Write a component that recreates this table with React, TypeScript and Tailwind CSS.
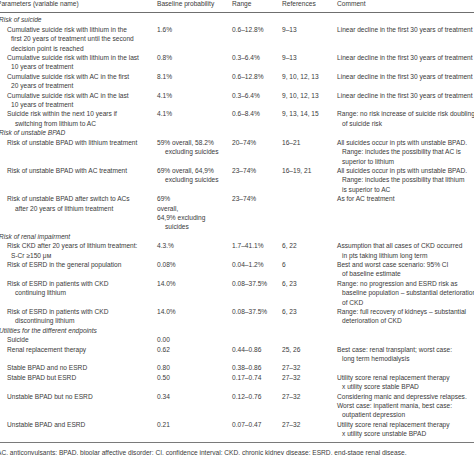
import React from 'react';

// A cell line: plain text, or [text, indent key]
type Line = string | [string, 'a' | 'b' | 'c'];

interface Row {
  params: Line[];
  base?: Line[];
  range?: string;
  refs?: string;
  comment?: Line[];
}

type Entry = { section: string } | Row;

const indentClass: Record<string, string> = {
  a: 'pl-[4px]',
  b: 'pl-[8px]',
  c: 'pl-[5px]',
};

const linear = ['Linear decline in the first 30 years of treatment'];

const entries: Entry[] = [
  { section: 'Risk of suicide' },
  {
    params: ['Cumulative suicide risk with lithium in the', ['first 20 years of treatment until the second', 'a'], ['decision point is reached', 'a']],
    base: ['1.6%'],
    range: '0.6–12.8%',
    refs: '9–13',
    comment: linear,
  },
  {
    params: ['Cumulative suicide risk with lithium in the last', ['10 years of treatment', 'a']],
    base: ['0.8%'],
    range: '0.3–6.4%',
    refs: '9–13',
    comment: linear,
  },
  {
    params: ['Cumulative suicide risk with AC in the first', ['20 years of treatment', 'a']],
    base: ['8.1%'],
    range: '0.6–12.8%',
    refs: '9, 10, 12, 13',
    comment: linear,
  },
  {
    params: ['Cumulative suicide risk with AC in the last', ['10 years of treatment', 'a']],
    base: ['4.1%'],
    range: '0.3–6.4%',
    refs: '9, 10, 12, 13',
    comment: linear,
  },
  {
    params: ['Suicide risk within the next 10 years if', ['switching from lithium to AC', 'b']],
    base: ['4.1%'],
    range: '0.6–8.4%',
    refs: '9, 13, 14, 15',
    comment: ['Range: no risk increase of suicide risk doubling', ['of suicide risk', 'c']],
  },
  { section: 'Risk of unstable BPAD' },
  {
    params: ['Risk of unstable BPAD with lithium treatment'],
    base: ['59% overall, 58.2%', ['excluding suicides', 'b']],
    range: '20–74%',
    refs: '16–21',
    comment: ['All suicides occur in pts with unstable BPAD.', ['Range: includes the possibility that AC is', 'c'], ['superior to lithium', 'c']],
  },
  {
    params: ['Risk of unstable BPAD with AC treatment'],
    base: ['69% overall, 64,9%', ['excluding suicides', 'b']],
    range: '23–74%',
    refs: '16–19, 21',
    comment: ['All suicides occur in pts with unstable BPAD.', ['Range: includes the possibility that lithium', 'c'], ['is superior to AC', 'c']],
  },
  {
    params: ['Risk of unstable BPAD after switch to ACs', ['after 20 years of lithium treatment', 'b']],
    base: ['69%', 'overall,', '64,9% excluding', ['suicides', 'b']],
    range: '23–74%',
    comment: ['As for AC treatment'],
  },
  { section: 'Risk of renal impairment' },
  {
    params: ['Risk CKD after 20 years of lithium treatment:', ['S-Cr ≥150 μᴍ', 'a']],
    base: ['4.3.%'],
    range: '1.7–41.1%',
    refs: '6, 22',
    comment: ['Assumption that all cases of CKD occurred', ['in pts taking lithium long term', 'c']],
  },
  {
    params: ['Risk of ESRD in the general population'],
    base: ['0.08%'],
    range: '0.04–1.2%',
    refs: '6',
    comment: ['Best and worst case scenario: 95% CI', ['of baseline estimate', 'c']],
  },
  {
    params: ['Risk of ESRD in patients with CKD', ['continuing lithium', 'b']],
    base: ['14.0%'],
    range: '0.08–37.5%',
    refs: '6, 23',
    comment: ['Range: no progression and ESRD risk as', ['baseline population – substantial deterioration', 'c'], ['of CKD', 'c']],
  },
  {
    params: ['Risk of ESRD in patients with CKD', ['discontinuing lithium', 'b']],
    base: ['14.0%'],
    range: '0.08–37.5%',
    refs: '6, 23',
    comment: ['Range: full recovery of kidneys – substantial', ['deterioration of CKD', 'c']],
  },
  { section: 'Utilities for the different endpoints' },
  { params: ['Suicide'], base: ['0.00'] },
  {
    params: ['Renal replacement therapy'],
    base: ['0.62'],
    range: '0.44–0.86',
    refs: '25, 26',
    comment: ['Best case: renal transplant; worst case:', ['long term hemodialysis', 'c']],
  },
  { params: ['Stable BPAD and no ESRD'], base: ['0.80'], range: '0.38–0.86', refs: '27–32' },
  {
    params: ['Stable BPAD but ESRD'],
    base: ['0.50'],
    range: '0.17–0.74',
    refs: '27–32',
    comment: ['Utility score renal replacement therapy', ['x utility score stable BPAD', 'c']],
  },
  {
    params: ['Unstable BPAD but no ESRD'],
    base: ['0.34'],
    range: '0.12–0.76',
    refs: '27–32',
    comment: ['Considering manic and depressive relapses.', 'Worst case: inpatient mania, best case:', ['outpatient depression', 'c']],
  },
  {
    params: ['Unstable BPAD and ESRD'],
    base: ['0.21'],
    range: '0.07–0.47',
    refs: '27–32',
    comment: ['Utility score renal replacement therapy', ['x utility score unstable BPAD', 'c']],
  },
];

const Lines: React.FC<{ lines?: Line[] }> = ({ lines }) => (
  <div>
    {(lines ?? []).map((l, i) =>
      typeof l === 'string' ? (
        <div key={i} className="whitespace-nowrap">{l}</div>
      ) : (
        <div key={i} className={`whitespace-nowrap ${indentClass[l[1]]}`}>{l[0]}</div>
      )
    )}
  </div>
);

const cols = 'grid grid-cols-[160px_75px_50px_55px_220px]';

export default function App() {
  return (
    <div className="w-[474px] h-[455px] overflow-hidden bg-white">
      <div
        className="-ml-[3px] -mt-px text-[6.6px] leading-[9.4px] text-[#3a3a3a]"
        style={{ fontFamily: '"Liberation Sans", Arial, sans-serif' }}
      >
        {/* Header */}
        <div className={`${cols} pb-[4px] border-b border-[#6f6f6f]`}>
          <div className="whitespace-nowrap">Parameters (variable name)</div>
          <div className="whitespace-nowrap">Baseline probability</div>
          <div>Range</div>
          <div>References</div>
          <div>Comment</div>
        </div>

        {/* Body */}
        <div className="pt-[2px] pb-[3px] border-b border-[#7a7a7a]">
          {entries.map((e, i) =>
            'section' in e ? (
              <div key={i} className="pl-[2px] italic whitespace-nowrap">{e.section}</div>
            ) : (
              <div key={i} className={cols}>
                <div className="pl-[10px]"><Lines lines={e.params} /></div>
                <Lines lines={e.base} />
                <div className="whitespace-nowrap">{e.range}</div>
                <div className="whitespace-nowrap">{e.refs}</div>
                <Lines lines={e.comment} />
              </div>
            )
          )}
        </div>

        {/* Footnote */}
        <div className="pt-[5px] whitespace-nowrap">
          AC, anticonvulsants; BPAD, bipolar affective disorder; CI, confidence interval; CKD, chronic kidney disease; ESRD, end-stage renal disease.
        </div>
      </div>
    </div>
  );
}
